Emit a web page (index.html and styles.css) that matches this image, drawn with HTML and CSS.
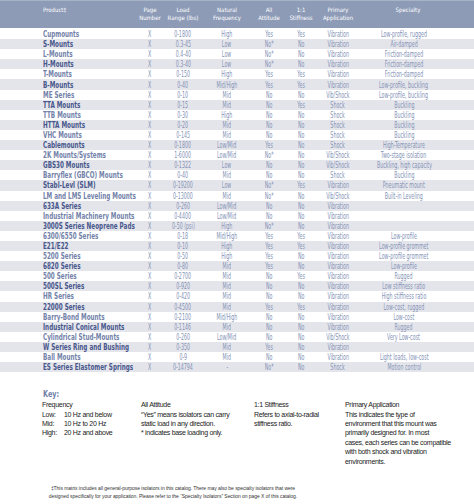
FILE: index.html
```html
<!DOCTYPE html>
<html>
<head>
<meta charset="utf-8">
<link rel="stylesheet" href="styles.css">
</head>
<body>
<div class="page">
  <div class="thead">
    <span class="prod">Product‡</span>
    <span>Page<br>Number</span>
    <span>Load<br>Range (lbs)</span>
    <span>Natural<br>Frequency</span>
    <span>All<br>Attitude</span>
    <span>1:1<br>Stiffness</span>
    <span>Primary<br>Application</span>
    <span class="spec">Specialty</span>
  </div>
  <div class="tbody">
    <div class="row"><span class="prod">Cupmounts</span><span>X</span><span>0-1800</span><span>High</span><span>Yes</span><span>Yes</span><span>Vibration</span><span>Low-profile, rugged</span></div>
    <div class="row"><span class="prod">S-Mounts</span><span>X</span><span>0.3-45</span><span>Low</span><span>No*</span><span>No</span><span>Vibration</span><span>Air-damped</span></div>
    <div class="row"><span class="prod">L-Mounts</span><span>X</span><span>0.4-40</span><span>Low</span><span>No*</span><span>No</span><span>Vibration</span><span>Friction-damped</span></div>
    <div class="row"><span class="prod">H-Mounts</span><span>X</span><span>0.3-40</span><span>Low</span><span>No*</span><span>No</span><span>Vibration</span><span>Friction-damped</span></div>
    <div class="row"><span class="prod">T-Mounts</span><span>X</span><span>0-150</span><span>High</span><span>Yes</span><span>Yes</span><span>Vibration</span><span>Friction-damped</span></div>
    <div class="row"><span class="prod">B-Mounts</span><span>X</span><span>0-40</span><span>Mid/High</span><span>Yes</span><span>Yes</span><span>Vibration</span><span>Low-profile, buckling</span></div>
    <div class="row"><span class="prod">ME Series</span><span>X</span><span>0-10</span><span>Mid</span><span>No</span><span>No</span><span>Vib/Shock</span><span>Low-profile, buckling</span></div>
    <div class="row"><span class="prod">TTA Mounts</span><span>X</span><span>0-15</span><span>Mid</span><span>No</span><span>Yes</span><span>Shock</span><span>Buckling</span></div>
    <div class="row"><span class="prod">TTB Mounts</span><span>X</span><span>0-30</span><span>High</span><span>No</span><span>No</span><span>Shock</span><span>Buckling</span></div>
    <div class="row"><span class="prod">HTTA Mounts</span><span>X</span><span>0-20</span><span>Mid</span><span>No</span><span>No</span><span>Shock</span><span>Buckling</span></div>
    <div class="row"><span class="prod">VHC Mounts</span><span>X</span><span>0-145</span><span>Mid</span><span>No</span><span>No</span><span>Shock</span><span>Buckling</span></div>
    <div class="row"><span class="prod">Cablemounts</span><span>X</span><span>0-1800</span><span>Low/Mid</span><span>Yes</span><span>No</span><span>Shock</span><span>High-Temperature</span></div>
    <div class="row"><span class="prod">2K Mounts/Systems</span><span>X</span><span>1-6000</span><span>Low/Mid</span><span>No*</span><span>No</span><span>Vib/Shock</span><span>Two-stage isolation</span></div>
    <div class="row"><span class="prod">GBS30 Mounts</span><span>X</span><span>0-1322</span><span>Low</span><span>No</span><span>No</span><span>Vib/Shock</span><span>Buckling, high capacity</span></div>
    <div class="row"><span class="prod">Barryflex (GBCO) Mounts</span><span>X</span><span>0-40</span><span>Mid</span><span>No</span><span>No</span><span>Shock</span><span>Buckling</span></div>
    <div class="row"><span class="prod">Stabl-Levl (SLM)</span><span>X</span><span>0-19200</span><span>Low</span><span>No*</span><span>Yes</span><span>Vibration</span><span>Pneumatic mount</span></div>
    <div class="row"><span class="prod">LM and LMS Leveling Mounts</span><span>X</span><span>0-13000</span><span>Mid</span><span>No*</span><span>No</span><span>Vib/Shock</span><span>Built-in Leveling</span></div>
    <div class="row"><span class="prod">633A Series</span><span>X</span><span>0-260</span><span>Low/Mid</span><span>No</span><span>No</span><span>Vibration</span><span></span></div>
    <div class="row"><span class="prod">Industrial Machinery Mounts</span><span>X</span><span>0-4400</span><span>Low/Mid</span><span>No</span><span>No</span><span>Vibration</span><span></span></div>
    <div class="row"><span class="prod">3000S Series Neoprene Pads</span><span>X</span><span>0-50 (psi)</span><span>High</span><span>No*</span><span>No</span><span>Vibration</span><span></span></div>
    <div class="row"><span class="prod">6300/6550 Series</span><span>X</span><span>0-18</span><span>Mid/High</span><span>Yes</span><span>Yes</span><span>Vibration</span><span>Low-profile</span></div>
    <div class="row"><span class="prod">E21/E22</span><span>X</span><span>0-10</span><span>High</span><span>Yes</span><span>Yes</span><span>Vibration</span><span>Low-profile grommet</span></div>
    <div class="row"><span class="prod">5200 Series</span><span>X</span><span>0-50</span><span>High</span><span>Yes</span><span>No</span><span>Vibration</span><span>Low-profile grommet</span></div>
    <div class="row"><span class="prod">6820 Series</span><span>X</span><span>0-80</span><span>Mid</span><span>Yes</span><span>No</span><span>Vibration</span><span>Low-profile</span></div>
    <div class="row"><span class="prod">500 Series</span><span>X</span><span>0-2700</span><span>Mid</span><span>No</span><span>Yes</span><span>Vibration</span><span>Rugged</span></div>
    <div class="row"><span class="prod">500SL Series</span><span>X</span><span>0-920</span><span>Mid</span><span>No</span><span>No</span><span>Vibration</span><span>Low stiffness ratio</span></div>
    <div class="row"><span class="prod">HR Series</span><span>X</span><span>0-420</span><span>Mid</span><span>No</span><span>No</span><span>Vibration</span><span>High stiffness ratio</span></div>
    <div class="row"><span class="prod">22000 Series</span><span>X</span><span>0-4500</span><span>Mid</span><span>Yes</span><span>Yes</span><span>Vibration</span><span>Low-cost, rugged</span></div>
    <div class="row"><span class="prod">Barry-Bond Mounts</span><span>X</span><span>0-2100</span><span>Mid/High</span><span>No</span><span>No</span><span>Vibration</span><span>Low-cost</span></div>
    <div class="row"><span class="prod">Industrial Conical Mounts</span><span>X</span><span>0-1146</span><span>Mid</span><span>No</span><span>No</span><span>Vibration</span><span>Rugged</span></div>
    <div class="row"><span class="prod">Cylindrical Stud-Mounts</span><span>X</span><span>0-260</span><span>Low/Mid</span><span>No</span><span>No</span><span>Vib/Shock</span><span>Very Low-cost</span></div>
    <div class="row"><span class="prod">W Series Ring and Bushing</span><span>X</span><span>0-350</span><span>Mid</span><span>Yes</span><span>No</span><span>Vibration</span><span></span></div>
    <div class="row"><span class="prod">Ball Mounts</span><span>X</span><span>0-9</span><span>Mid</span><span>No</span><span>No</span><span>Vibration</span><span>Light loads, low-cost</span></div>
    <div class="row"><span class="prod">ES Series Elastomer Springs</span><span>X</span><span>0-14794</span><span>-</span><span>No*</span><span>No</span><span>Shock</span><span>Motion control</span></div>
  </div>

  <div class="key">
    <div class="key-title">Key:</div>
    <div class="key-grid">
      <div class="key-col">
        <div class="key-head">Frequency</div>
        <div class="freq">
          <span>Low:</span><span>10 Hz and below</span>
          <span>Mid:</span><span>10 Hz to 20 Hz</span>
          <span>High:</span><span>20 Hz and above</span>
        </div>
      </div>
      <div class="key-col">
        <div class="key-head">All Attitude</div>
        <div>“Yes” means isolators can carry<br>static load in any direction.<br>* indicates base loading only.</div>
      </div>
      <div class="key-col">
        <div class="key-head">1:1 Stiffness</div>
        <div>Refers to axial-to-radial<br>stiffness ratio.</div>
      </div>
      <div class="key-col">
        <div class="key-head">Primary Application</div>
        <div>This indicates the type of<br>environment that this mount was<br>primarily designed for. In most<br>cases, each series can be compatible<br>with both shock and vibration<br>environments.</div>
      </div>
    </div>
  </div>

  <div class="footnote">‡This matrix includes all general-purpose isolators in this catalog. There may also be specialty isolators that were<br>designed specifically for your application. Please refer to the “Specialty Isolators” Section on page X of this catalog.</div>
</div>
</body>
</html>
```

FILE: styles.css
```css
html, body {
  margin: 0;
  padding: 0;
  background: #ffffff;
}

.page {
  width: 474px;
  height: 504px;
  overflow: hidden;
  position: relative;
}

.thead,
.row {
  display: grid;
  grid-template-columns: 97px 20px 46px 42px 42px 22px 52px 80px;
  padding-left: 43px;
}

.thead {
  height: 28px;
  box-sizing: border-box;
  padding-top: 5px;
  margin-bottom: 1px;
  background: #8d9bb7;
  border-top: 1px solid #a9b3c7;
  color: #ffffff;
  font: 6px/8px "DejaVu Sans Condensed", "DejaVu Sans", sans-serif;
  align-items: start;
}

.thead span {
  justify-self: center;
  text-align: center;
  white-space: nowrap;
}

.thead .prod {
  justify-self: start;
}

.thead .spec {
  padding-left: 8px;
}

.row {
  height: 10.1px;
  align-items: center;
  font: 8.5px/10px "DejaVu Sans Condensed", "DejaVu Sans", sans-serif;
  color: #8493b6;
}

.tbody .row:nth-child(even) {
  background: #e4e5eb;
}

.row span {
  justify-self: center;
  white-space: nowrap;
  transform: scaleX(0.62);
}

.row .prod {
  justify-self: start;
  transform-origin: left center;
  transform: scaleX(0.74);
  font-weight: bold;
  font-size: 8.5px;
  color: #7382a9;
}

.tbody .row:nth-child(even) .prod {
  color: #48578c;
}

.key {
  padding: 17px 0 0 42px;
}

.key-title {
  font: bold 9px/11px "DejaVu Sans Condensed", "DejaVu Sans", sans-serif;
  color: #7382aa;
  transform: scaleX(0.8);
  transform-origin: left center;
  margin-left: 1px;
}

.key-grid {
  display: grid;
  grid-template-columns: 99px 113px 91px 1fr;
  font: 7px/9.4px "Liberation Sans", Arial, sans-serif;
  letter-spacing: -0.3px;
  color: #222222;
}

.key-col {
  white-space: nowrap;
}

.freq {
  display: grid;
  grid-template-columns: 22px auto;
}

.footnote {
  margin-top: 18px;
  margin-left: 42px;
  width: 262px;
  text-align: center;
  font: 5px/8px "Liberation Sans", Arial, sans-serif;
  letter-spacing: -0.05px;
  color: #333333;
  white-space: nowrap;
}
```
